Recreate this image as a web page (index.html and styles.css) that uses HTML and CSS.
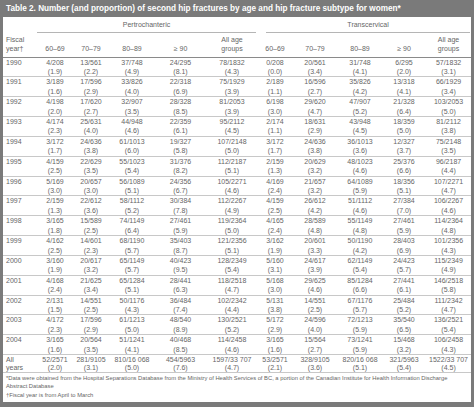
FILE: index.html
```html
<!DOCTYPE html>
<html>
<head>
<meta charset="utf-8">
<link rel="stylesheet" href="styles.css">
</head>
<body>
<div class="frame">
  <div class="title">Table 2. Number (and proportion) of second hip fractures by age and hip fracture subtype for women*</div>
  <div class="sheet">
    <table class="data">
      <colgroup>
        <col class="c-year"><col class="c1"><col class="c2"><col class="c3"><col class="c4"><col class="c5">
        <col class="c6"><col class="c7"><col class="c8"><col class="c9"><col class="c10">
      </colgroup>
      <thead>
        <tr class="group-row">
          <th></th>
          <th colspan="5"><div class="group g-left">Pertrochanteric</div></th>
          <th colspan="5"><div class="group g-right">Transcervical</div></th>
        </tr>
        <tr class="head-row">
          <th class="year">Fiscal<br>year†</th>
          <th>60–69</th><th>70–79</th><th>80–89</th><th>≥ 90</th><th>All age<br>groups</th>
          <th>60–69</th><th>70–79</th><th>80–89</th><th>≥ 90</th><th>All age<br>groups</th>
        </tr>
      </thead>
      <tbody>
        <tr><td class="year">1990</td><td>4/208<br>(1.9)</td><td>13/561<br>(2.2)</td><td>37/748<br>(4.9)</td><td>24/295<br>(8.1)</td><td>78/1832<br>(4.3)</td><td>0/208<br>(0.0)</td><td>20/561<br>(3.4)</td><td>31/748<br>(4.1)</td><td>6/295<br>(2.0)</td><td>57/1832<br>(3.1)</td></tr>
        <tr><td class="year">1991</td><td>3/189<br>(1.6)</td><td>17/596<br>(2.9)</td><td>33/826<br>(4.0)</td><td>22/318<br>(6.9)</td><td>75/1929<br>(3.9)</td><td>2/189<br>(1.1)</td><td>16/596<br>(2.7)</td><td>35/826<br>(4.2)</td><td>13/318<br>(4.1)</td><td>66/1929<br>(3.4)</td></tr>
        <tr><td class="year">1992</td><td>4/198<br>(2.0)</td><td>17/620<br>(2.7)</td><td>32/907<br>(3.5)</td><td>28/328<br>(8.5)</td><td>81/2053<br>(3.9)</td><td>6/198<br>(3.0)</td><td>29/620<br>(4.7)</td><td>47/907<br>(5.2)</td><td>21/328<br>(6.4)</td><td>103/2053<br>(5.0)</td></tr>
        <tr><td class="year">1993</td><td>4/174<br>(2.3)</td><td>25/631<br>(4.0)</td><td>44/948<br>(4.6)</td><td>22/359<br>(6.1)</td><td>95/2112<br>(4.5)</td><td>2/174<br>(1.1)</td><td>18/631<br>(2.9)</td><td>43/948<br>(4.5)</td><td>18/359<br>(5.0)</td><td>81/2112<br>(3.8)</td></tr>
        <tr><td class="year">1994</td><td>3/172<br>(1.7)</td><td>24/636<br>(3.8)</td><td>61/1013<br>(6.0)</td><td>19/327<br>(5.8)</td><td>107/2148<br>(5.0)</td><td>3/172<br>(1.7)</td><td>24/636<br>(3.8)</td><td>36/1013<br>(3.6)</td><td>12/327<br>(3.7)</td><td>75/2148<br>(3.5)</td></tr>
        <tr><td class="year">1995</td><td>4/159<br>(2.5)</td><td>22/629<br>(3.5)</td><td>55/1023<br>(5.4)</td><td>31/376<br>(8.2)</td><td>112/2187<br>(5.1)</td><td>2/159<br>(1.3)</td><td>20/629<br>(3.2)</td><td>48/1023<br>(4.6)</td><td>25/376<br>(6.6)</td><td>96/2187<br>(4.4)</td></tr>
        <tr><td class="year">1996</td><td>5/169<br>(3.0)</td><td>20/657<br>(3.0)</td><td>56/1089<br>(5.1)</td><td>24/356<br>(6.7)</td><td>105/2271<br>(4.6)</td><td>4/169<br>(2.4)</td><td>21/657<br>(3.2)</td><td>64/1089<br>(5.9)</td><td>18/356<br>(5.1)</td><td>107/2271<br>(4.7)</td></tr>
        <tr><td class="year">1997</td><td>2/159<br>(1.3)</td><td>22/612<br>(3.6)</td><td>58/1112<br>(5.2)</td><td>30/384<br>(7.8)</td><td>112/2267<br>(4.9)</td><td>4/159<br>(2.5)</td><td>26/612<br>(4.2)</td><td>51/1112<br>(4.6)</td><td>27/384<br>(7.0)</td><td>106/2267<br>(4.6)</td></tr>
        <tr><td class="year">1998</td><td>3/165<br>(1.8)</td><td>15/589<br>(2.5)</td><td>74/1149<br>(6.4)</td><td>27/461<br>(5.9)</td><td>119/2364<br>(5.0)</td><td>4/165<br>(2.4)</td><td>28/589<br>(4.8)</td><td>55/1149<br>(4.8)</td><td>27/461<br>(5.9)</td><td>114/2364<br>(4.8)</td></tr>
        <tr><td class="year">1999</td><td>4/162<br>(2.5)</td><td>14/601<br>(2.3)</td><td>68/1190<br>(5.7)</td><td>35/403<br>(8.7)</td><td>121/2356<br>(5.1)</td><td>3/162<br>(1.9)</td><td>20/601<br>(3.3)</td><td>50/1190<br>(4.2)</td><td>28/403<br>(6.9)</td><td>101/2356<br>(4.3)</td></tr>
        <tr><td class="year">2000</td><td>3/160<br>(1.9)</td><td>20/617<br>(3.2)</td><td>65/1149<br>(5.7)</td><td>40/423<br>(9.5)</td><td>128/2349<br>(5.4)</td><td>5/160<br>(3.1)</td><td>24/617<br>(3.9)</td><td>62/1149<br>(5.4)</td><td>24/423<br>(5.7)</td><td>115/2349<br>(4.9)</td></tr>
        <tr><td class="year">2001</td><td>4/168<br>(2.4)</td><td>21/625<br>(3.4)</td><td>65/1284<br>(5.1)</td><td>28/441<br>(6.3)</td><td>118/2518<br>(4.7)</td><td>5/168<br>(3.0)</td><td>29/625<br>(4.6)</td><td>85/1284<br>(6.6)</td><td>27/441<br>(6.1)</td><td>146/2518<br>(5.8)</td></tr>
        <tr><td class="year">2002</td><td>2/131<br>(1.5)</td><td>14/551<br>(2.5)</td><td>50/1176<br>(4.3)</td><td>36/484<br>(7.4)</td><td>102/2342<br>(4.4)</td><td>5/131<br>(3.8)</td><td>14/551<br>(2.5)</td><td>67/1176<br>(5.7)</td><td>25/484<br>(5.2)</td><td>111/2342<br>(4.7)</td></tr>
        <tr><td class="year">2003</td><td>4/172<br>(2.3)</td><td>17/596<br>(2.9)</td><td>61/1213<br>(5.0)</td><td>48/540<br>(8.9)</td><td>130/2521<br>(5.2)</td><td>5/172<br>(2.9)</td><td>24/596<br>(4.0)</td><td>72/1213<br>(5.9)</td><td>35/540<br>(6.5)</td><td>136/2521<br>(5.4)</td></tr>
        <tr><td class="year">2004</td><td>3/165<br>(1.6)</td><td>20/564<br>(3.5)</td><td>51/1241<br>(4.1)</td><td>40/468<br>(8.5)</td><td>114/2458<br>(4.6)</td><td>3/165<br>(1.6)</td><td>15/564<br>(2.7)</td><td>73/1241<br>(5.9)</td><td>15/468<br>(3.2)</td><td>106/2458<br>(4.3)</td></tr>
        <tr class="total"><td class="year">All<br>years</td><td>52/2571<br>(2.0)</td><td>281/9105<br>(3.1)</td><td>810/16 068<br>(5.0)</td><td>454/5963<br>(7.6)</td><td>1597/33 707<br>(4.7)</td><td>53/2571<br>(2.1)</td><td>328/9105<br>(3.6)</td><td>820/16 068<br>(5.1)</td><td>321/5963<br>(5.4)</td><td>1522/33 707<br>(4.5)</td></tr>
      </tbody>
    </table>
    <div class="notes">
      <p>*Data were obtained from the Hospital Separations Database from the Ministry of Health Services of BC, a portion of the Canadian Institute for Health Information Discharge<br>Abstract Database</p>
      <p>†Fiscal year is from April to March</p>
    </div>
  </div>
</div>
</body>
</html>
```

FILE: styles.css
```css
html, body {
  margin: 0;
  padding: 0;
  background: #7a7a7a;
}

.frame {
  width: 474px;
  height: 407px;
  box-sizing: border-box;
  padding: 0 3px 5px 3px;
  background: #7a7a7a;
  display: flex;
  flex-direction: column;
  font-family: "Liberation Sans", Arial, sans-serif;
}

.title {
  height: 17px;
  line-height: 17px;
  padding-left: 3px;
  color: #ffffff;
  font-weight: bold;
  font-size: 8.2px;
  white-space: nowrap;
}

.sheet {
  flex: 1;
  background: #ffffff;
  overflow: hidden;
}

.data {
  width: 468px;
  table-layout: fixed;
  border-collapse: collapse;
  font-size: 7px;
  color: #666666;
}

.c-year { width: 34px; }
.c1 { width: 36px; }
.c2 { width: 36px; }
.c3 { width: 46px; }
.c4 { width: 51px; }
.c5 { width: 52px; }
.c6 { width: 34px; }
.c7 { width: 46px; }
.c8 { width: 44px; }
.c9 { width: 44px; }
.c10 { width: 45px; }

.data th,
.data td {
  padding: 0;
  font-weight: normal;
  text-align: center;
  white-space: nowrap;
}

.group-row th {
  height: 16px;
  vertical-align: top;
}

.group {
  padding: 3px 0;
  line-height: 9px;
  border-bottom: 1px solid #b5b5b5;
}

.g-left { margin-right: 2px; }
.g-right { margin-left: 8px; margin-right: 1px; }

.head-row th {
  height: 24px;
  box-sizing: border-box;
  vertical-align: bottom;
  padding-bottom: 4px;
  line-height: 9px;
  border-bottom: 1px solid #8a8a8a;
}

.data .year {
  text-align: left;
  padding-left: 3px;
}

.data tbody td {
  height: 19.85px;
  box-sizing: border-box;
  vertical-align: top;
  line-height: 9.4px;
  border-bottom: 1px solid #c8c8c8;
}

.data tbody .total td {
  height: 18px;
  padding-top: 1px;
  line-height: 7.5px;
}

.notes {
  padding: 2px 3px 0 3px;
  font-size: 5.8px;
  line-height: 7.5px;
  color: #666666;
}

.notes p {
  margin: 0 0 2px 0;
  white-space: nowrap;
}
```
